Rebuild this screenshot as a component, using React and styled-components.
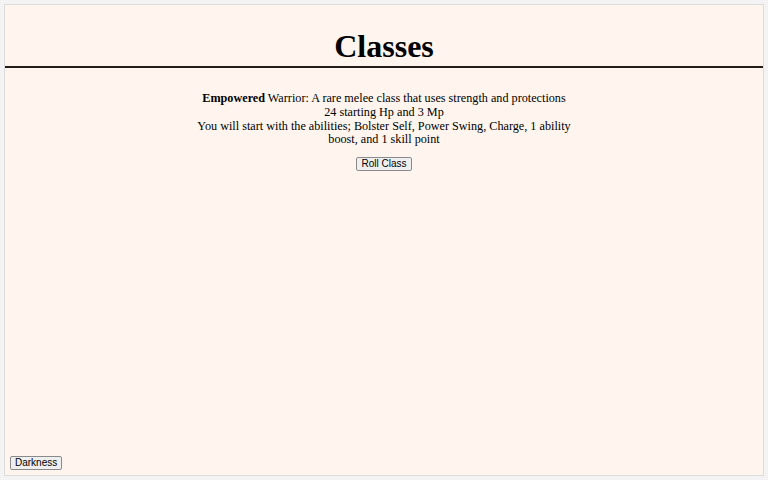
import React from 'react';
import styled, { createGlobalStyle } from 'styled-components';

const GlobalStyle = createGlobalStyle`
  html, body {
    margin: 0;
    height: 100%;
  }

  body {
    background: #f3f3f3;
    padding: 4px;
    box-sizing: border-box;
    font-family: "Liberation Serif", "Times New Roman", serif;
    color: #000;
  }

  #root {
    height: 100%;
  }
`;

const Page = styled.div`
  box-sizing: border-box;
  height: 100%;
  display: flex;
  flex-direction: column;
  background: #fff5ee;
  border: 1px solid #dcdcdc;
`;

const Title = styled.h1`
  margin: 23px 0 0;
  padding-bottom: 1px;
  font-size: 32px;
  font-weight: bold;
  text-align: center;
  border-bottom: 2px solid #221c1a;
`;

const ClassInfo = styled.div`
  max-width: 384px;
  margin: 24px auto 0;
  font-size: 12.2px;
  line-height: 13.8px;
  text-align: center;
`;

const Line = styled.div``;

const Button = styled.button`
  font-family: "Liberation Sans", Arial, sans-serif;
  font-size: 10px;
  line-height: 12px;
  color: #000;
  background: #efefef;
  border: 1px solid #8a8a8a;
  border-radius: 2px;
  padding: 0 4px;
  cursor: pointer;
`;

const Actions = styled.div`
  display: flex;
  justify-content: center;
  margin-top: 10px;
`;

const Footer = styled.div`
  margin-top: auto;
  padding: 0 0 5px 5px;
`;

const ClassDescription = ({ tier, name, summary, hp, mp, abilities }) => (
  <ClassInfo>
    <Line>
      <b>{tier}</b> {name}: {summary}
    </Line>
    <Line>{hp} starting Hp and {mp} Mp</Line>
    <Line>You will start with the abilities; {abilities}</Line>
  </ClassInfo>
);

export default function App() {
  return (
    <>
      <GlobalStyle />
      <Page>
        <Title>Classes</Title>
        <ClassDescription
          tier="Empowered"
          name="Warrior"
          summary="A rare melee class that uses strength and protections"
          hp={24}
          mp={3}
          abilities="Bolster Self, Power Swing, Charge, 1 ability boost, and 1 skill point"
        />
        <Actions>
          <Button>Roll Class</Button>
        </Actions>
        <Footer>
          <Button>Darkness</Button>
        </Footer>
      </Page>
    </>
  );
}
